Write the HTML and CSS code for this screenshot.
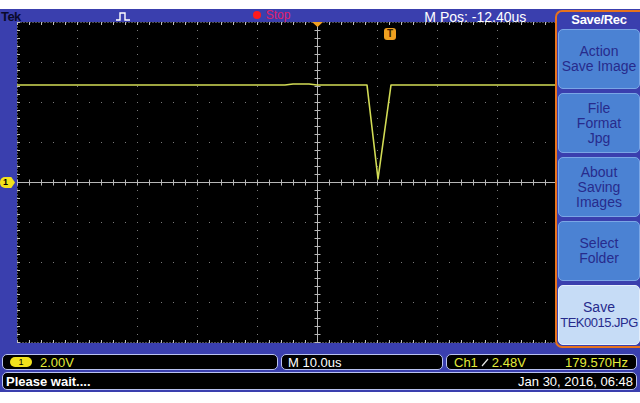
FILE: index.html
```html
<!DOCTYPE html>
<html lang="en">
<head>
    <meta charset="UTF-8">
    <title>Save/Rec - Scope Screen</title>
    <link rel="stylesheet" href="styles.css">
</head>
<body>
    <div class="scope">
        <div class="topbar">
            <span class="brand">Tek</span>
            <svg class="pulse" width="14" height="9" viewBox="0 0 14 9">
                <path d="M0 8 H4 V1 H9 V8 H14" fill="none" stroke="#fff" stroke-width="1.4"/>
            </svg>
            <span class="run-dot"></span>
            <span class="run-state">Stop</span>
            <span class="mpos">M Pos: -12.40us</span>
        </div>

        <div class="screen">
            <svg class="graticule" width="600" height="321" viewBox="0 0 600 321">
                <rect x="0" y="0" width="600" height="321" fill="#000"/>
                <!-- major division dots -->
                <g stroke="#7a7a7a" stroke-width="1">
                    <line x1="60.5" y1="0" x2="60.5" y2="321" stroke-dasharray="1 7"/>
                    <line x1="120.5" y1="0" x2="120.5" y2="321" stroke-dasharray="1 7"/>
                    <line x1="180.5" y1="0" x2="180.5" y2="321" stroke-dasharray="1 7"/>
                    <line x1="240.5" y1="0" x2="240.5" y2="321" stroke-dasharray="1 7"/>
                    <line x1="360.5" y1="0" x2="360.5" y2="321" stroke-dasharray="1 7"/>
                    <line x1="420.5" y1="0" x2="420.5" y2="321" stroke-dasharray="1 7"/>
                    <line x1="480.5" y1="0" x2="480.5" y2="321" stroke-dasharray="1 7"/>
                    <line x1="540.5" y1="0" x2="540.5" y2="321" stroke-dasharray="1 7"/>
                    <line x1="0" y1="40.5" x2="600" y2="40.5" stroke-dasharray="1 11"/>
                    <line x1="0" y1="80.5" x2="600" y2="80.5" stroke-dasharray="1 11"/>
                    <line x1="0" y1="120.5" x2="600" y2="120.5" stroke-dasharray="1 11"/>
                    <line x1="0" y1="200.5" x2="600" y2="200.5" stroke-dasharray="1 11"/>
                    <line x1="0" y1="240.5" x2="600" y2="240.5" stroke-dasharray="1 11"/>
                    <line x1="0" y1="280.5" x2="600" y2="280.5" stroke-dasharray="1 11"/>
                </g>
                <!-- frame ticks -->
                <g stroke="#bdbdbd" stroke-width="1">
                    <rect x="0.5" y="0.5" width="599" height="320" fill="none" stroke-dasharray="1 2" stroke="#9a9a9a"/>
                    <line x1="0" y1="1.5" x2="600" y2="1.5" stroke-dasharray="1 11" stroke-width="3"/>
                    <line x1="0" y1="319.5" x2="600" y2="319.5" stroke-dasharray="1 11" stroke-width="3"/>
                    <line x1="1.5" y1="0" x2="1.5" y2="321" stroke-dasharray="1 7" stroke-width="3"/>
                </g>
                <!-- centre crosshair -->
                <g stroke="#b8b8b8" stroke-width="1">
                    <line x1="0" y1="160.5" x2="600" y2="160.5"/>
                    <line x1="300.5" y1="0" x2="300.5" y2="321"/>
                    <line x1="0" y1="160.5" x2="600" y2="160.5" stroke-dasharray="1 11" stroke-width="6"/>
                    <line x1="300.5" y1="0" x2="300.5" y2="321" stroke-dasharray="1 7" stroke-width="6"/>
                </g>
                <!-- channel 1 trace -->
                <polyline fill="none" stroke="#d2dc55" stroke-width="1.6" stroke-linejoin="round"
                    points="0,63 268,63 276,62 292,62 300,63 350,63 361,157 374,63 600,63"/>
                <!-- trigger position marker -->
                <path d="M295 0 H306 L300.5 5 Z" fill="#f0a020"/>
            </svg>

            <div class="ground-marker">1</div>
            <div class="trig-marker">T</div>
        </div>

        <div class="status-row">
            <div class="seg seg-ch">
                <span class="ch-pill">1</span>
                <span class="yellow">2.00V</span>
            </div>
            <div class="seg seg-time">M 10.0us</div>
            <div class="seg seg-trig">
                <span class="yellow">Ch1</span>
                <svg class="slope" width="8" height="10" viewBox="0 0 8 10">
                    <path d="M1 9 L7 2" stroke="#e8e8e8" stroke-width="1.2"/>
                </svg>
                <span class="yellow">2.48V</span>
                <span class="yellow freq">179.570Hz</span>
            </div>
        </div>
        <div class="message-row">
            <span class="message">Please wait....</span>
            <span class="clock">Jan 30, 2016, 06:48</span>
        </div>

        <div class="side-menu">
            <div class="menu-title">Save/Rec</div>
            <div class="menu-btn"><span>Action<br>Save Image</span></div>
            <div class="menu-btn"><span>File<br>Format<br>Jpg</span></div>
            <div class="menu-btn"><span>About<br>Saving<br>Images</span></div>
            <div class="menu-btn"><span>Select<br>Folder</span></div>
            <div class="menu-btn selected"><span>Save<br><span class="fname">TEK0015.JPG</span></span></div>
        </div>
    </div>
</body>
</html>
```

FILE: styles.css
```css
body {
    margin: 0;
    background: #fff;
    font-family: "Liberation Sans", Arial, sans-serif;
}

.scope {
    position: relative;
    width: 640px;
    height: 383px;
    margin-top: 9px;
    background: #3a3fae;
}

.topbar {
    display: flex;
    align-items: center;
    height: 13px;
    font-size: 14px;
    line-height: 13px;
    color: #fff;
}

.brand {
    margin-left: 1px;
    margin-top: 1px;
    font-weight: bold;
    font-size: 13px;
    color: #0a0a2a;
    letter-spacing: -0.6px;
}

.pulse {
    margin-left: 95px;
    margin-top: 1px;
}

.run-dot {
    width: 8px;
    height: 8px;
    margin-left: 123px;
    margin-top: -2px;
    border-radius: 50%;
    background: #ff1a1a;
}

.run-state {
    margin-left: 5px;
    color: #e0206a;
    font-size: 12px;
}

.mpos {
    margin-left: 134px;
    margin-top: 3px;
}

.screen {
    position: relative;
    height: 321px;
    padding-left: 17px;
    margin-bottom: 11px;
}

.graticule {
    display: block;
}

.ground-marker {
    position: absolute;
    left: 0;
    top: 155px;
    width: 15px;
    height: 11px;
    box-sizing: border-box;
    padding-left: 3px;
    font-size: 9px;
    line-height: 11px;
    font-weight: bold;
    color: #000;
    background: #f2e21c;
    border-radius: 5px 0 0 5px;
    clip-path: polygon(0 0, 75% 0, 100% 50%, 75% 100%, 0 100%);
}

.trig-marker {
    position: absolute;
    left: 384px;
    top: 6px;
    width: 12px;
    height: 12px;
    border-radius: 3px;
    background: #f0a020;
    color: #3a2000;
    font-size: 10px;
    font-weight: bold;
    line-height: 12px;
    text-align: center;
}

.status-row {
    display: flex;
    gap: 3px;
    height: 16px;
    padding: 0 3px 0 2px;
    margin-bottom: 2px;
}

.seg,
.message-row {
    display: flex;
    align-items: center;
    box-sizing: border-box;
    background: #000;
    border: 1.5px solid #b9c2f0;
    border-radius: 5px;
    color: #fff;
    font-size: 13px;
}

.seg-ch {
    width: 276px;
    padding-left: 7px;
}

.seg-time {
    width: 162px;
    padding-left: 6px;
}

.seg-trig {
    flex: 1;
    padding-left: 7px;
}

.yellow {
    color: #e4ec3a;
}

.ch-pill {
    width: 22px;
    height: 10px;
    margin-right: 8px;
    border-radius: 5px;
    background: #f2e21c;
    color: #000;
    font-size: 9px;
    line-height: 10px;
    text-align: center;
}

.slope {
    margin: 0 3px;
}

.freq {
    margin-left: auto;
    margin-right: 8px;
}

.message-row {
    justify-content: space-between;
    height: 18px;
    margin: 0 3px 0 2px;
    padding: 0 3px;
}

.message {
    font-weight: bold;
}

.side-menu {
    position: absolute;
    left: 555px;
    top: 1px;
    width: 85px;
    height: 338px;
    box-sizing: border-box;
    display: flex;
    flex-direction: column;
    gap: 4px;
    padding: 0 0 1px 1px;
    background: #3a3fae;
    border: 2px solid #e8731c;
    border-right: none;
    border-radius: 7px 0 0 7px;
}

.menu-title {
    height: 16px;
    margin-bottom: -3px;
    color: #fff;
    font-size: 13px;
    font-weight: bold;
    line-height: 16px;
    text-align: center;
    letter-spacing: -0.3px;
}

.menu-btn {
    display: flex;
    align-items: center;
    justify-content: center;
    height: 60px;
    box-sizing: border-box;
    background: #4b82d3;
    border: 1px solid #7aa6e6;
    border-radius: 5px;
    color: #272b8c;
    font-size: 14px;
    line-height: 15px;
    text-align: center;
}

.menu-btn.selected {
    background: #c6dcf6;
    border-color: #e4eefb;
}

.fname {
    font-size: 13px;
    letter-spacing: -0.5px;
}
```
